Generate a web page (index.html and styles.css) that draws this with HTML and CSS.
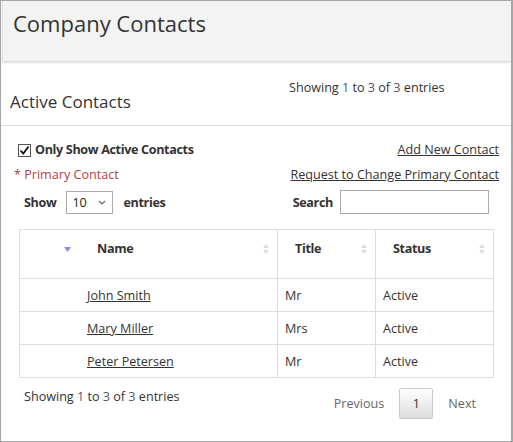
FILE: index.html
```html
<!DOCTYPE html>
<html lang="en">
<head>
    <meta charset="UTF-8">
    <title>Company Contacts</title>
    <link rel="stylesheet" href="styles.css">
</head>
<body>
    <div class="page">
        <header class="page-head">
            <h1>Company Contacts</h1>
        </header>

        <div class="panel-head">
            <h2>Active Contacts</h2>
            <div class="info">Showing <span class="num">1</span> to <span class="num">3</span> of <span class="num">3</span> entries</div>
        </div>

        <div class="panel-body">
            <div class="toolbar">
                <div class="toolbar-left">
                    <label class="only-active">
                        <span class="check"><svg width="11" height="11" viewBox="0 0 11 11"><path d="M1.5 5.5l2.8 3 5.2-7" fill="none" stroke="#111" stroke-width="1.8"/></svg></span>
                        Only Show Active Contacts
                    </label>
                    <div class="primary-note">* Primary Contact</div>
                </div>
                <div class="toolbar-right">
                    <a href="#">Add New Contact</a>
                    <a href="#">Request to Change Primary Contact</a>
                </div>
            </div>

            <div class="controls">
                <label class="length">Show
                    <span class="select">10 <svg width="8" height="5" viewBox="0 0 8 5"><path d="M1 1l3 3 3-3" fill="none" stroke="#666" stroke-width="1.2"/></svg></span>
                    entries</label>
                <label class="search">Search <input type="text"></label>
            </div>

            <table class="contacts">
                <thead>
                    <tr>
                        <th class="col-name">
                            <div class="th-in">
                                <span><svg class="sort-desc" width="7" height="5" viewBox="0 0 7 5"><path d="M0 0h7L3.5 5z" fill="#8c8cf0"/></svg>Name</span>
                                <svg class="sort" width="6" height="10" viewBox="0 0 6 10"><path d="M0 4h6L3 0zM0 6h6L3 10z" fill="#ddd"/></svg>
                            </div>
                        </th>
                        <th class="col-title">
                            <div class="th-in">
                                <span>Title</span>
                                <svg class="sort" width="6" height="10" viewBox="0 0 6 10"><path d="M0 4h6L3 0zM0 6h6L3 10z" fill="#ddd"/></svg>
                            </div>
                        </th>
                        <th class="col-status">
                            <div class="th-in">
                                <span>Status</span>
                                <svg class="sort" width="6" height="10" viewBox="0 0 6 10"><path d="M0 4h6L3 0zM0 6h6L3 10z" fill="#ddd"/></svg>
                            </div>
                        </th>
                    </tr>
                </thead>
                <tbody>
                    <tr><td class="col-name"><a href="#">John Smith</a></td><td>Mr</td><td>Active</td></tr>
                    <tr><td class="col-name"><a href="#">Mary Miller</a></td><td>Mrs</td><td>Active</td></tr>
                    <tr><td class="col-name"><a href="#">Peter Petersen</a></td><td>Mr</td><td>Active</td></tr>
                </tbody>
            </table>

            <div class="table-foot">
                <div class="info">Showing <span class="num">1</span> to <span class="num">3</span> of <span class="num">3</span> entries</div>
                <div class="paging">
                    <span class="page-link">Previous</span>
                    <span class="page-btn">1</span>
                    <span class="page-link">Next</span>
                </div>
            </div>
        </div>
    </div>
</body>
</html>
```

FILE: styles.css
```css
body {
    margin: 0;
    font-family: 'Open Sans', sans-serif;
    font-size: 12.6px;
    color: #333;
}
.page {
    width: 513px;
    height: 442px;
    box-sizing: border-box;
    border: 1px solid #a6a6a6;
    border-right-width: 2px;
    overflow: hidden;
}
.page-head {
    height: 61px;
    margin-left: 1px;
    background: #f3f3f3;
    border-left: 1px solid #e2e2e2;
    border-bottom: 1px solid #dcdcdc;
    box-shadow: 0 1px 2px rgba(0, 0, 0, 0.12);
    box-sizing: border-box;
}
.page-head h1 {
    margin: 0;
    padding: 6px 0 0 10px;
    font-size: 22px;
    font-weight: 400;
    line-height: 32px;
}
.panel-head {
    height: 64px;
    display: grid;
    grid-template-columns: 279px 1fr;
    padding: 0 9px;
    border-bottom: 1px solid #ddd;
    box-sizing: border-box;
}
.panel-head h2 {
    margin: 28px 0 0;
    font-size: 17px;
    font-weight: 400;
    line-height: 24px;
}
.panel-head .info {
    padding-top: 17px;
}
.info {
    line-height: 18px;
}
.num {
    color: #556;
}
.panel-body {
    padding: 14px 12px 0 13px;
}
.toolbar {
    display: flex;
    justify-content: space-between;
}
.only-active {
    display: flex;
    align-items: center;
    gap: 4px;
    margin-left: 4px;
    font-weight: 700;
    letter-spacing: -0.35px;
    line-height: 20px;
}
.check {
    width: 13px;
    height: 13px;
    box-sizing: border-box;
    border: 1px solid #555;
    background: #fff;
    display: flex;
    align-items: center;
    justify-content: center;
}
.primary-note {
    margin-top: 6px;
    color: #b0434b;
    line-height: 18px;
}
.toolbar-right {
    display: flex;
    flex-direction: column;
    align-items: flex-end;
    gap: 7px;
    padding-top: 1px;
}
.toolbar-right a {
    color: #333;
    line-height: 18px;
}
.controls {
    display: flex;
    justify-content: space-between;
    align-items: center;
    margin-top: 6px;
    padding: 0 10px 0 10px;
}
.length, .search {
    display: flex;
    align-items: center;
    font-weight: 700;
    letter-spacing: -0.35px;
}
.select {
    display: inline-flex;
    align-items: center;
    justify-content: space-between;
    width: 47px;
    height: 23px;
    box-sizing: border-box;
    margin: 0 10px 0 10px;
    padding: 0 6px 0 5px;
    border: 1px solid #aaa;
    font-weight: 400;
    letter-spacing: 0;
    color: #222;
}
.search input {
    width: 149px;
    height: 24px;
    box-sizing: border-box;
    margin: 0 0 0 7px;
    border: 1px solid #aaa;
}
.contacts {
    width: 475px;
    margin: 15px 0 0 5px;
    border-collapse: collapse;
}
.contacts th, .contacts td {
    border: 1px solid #ddd;
    text-align: left;
}
.contacts th {
    height: 49px;
    box-sizing: border-box;
    padding: 10px 8px 20px 17px;
    vertical-align: top;
    font-weight: 700;
    letter-spacing: -0.35px;
}
.th-in {
    display: flex;
    justify-content: space-between;
    align-items: center;
    line-height: 18px;
}
.sort-desc {
    margin: 0 26px 0 27px;
    vertical-align: 1px;
}
.contacts th.col-name {
    width: 258px;
    padding-left: 17px;
}
.contacts th.col-title {
    width: 98px;
}
.contacts td {
    height: 33px;
    box-sizing: border-box;
    padding: 1px 7px 0;
}
.contacts td.col-name {
    padding-left: 67px;
}
.contacts td a {
    color: #333;
}
.table-foot {
    display: flex;
    justify-content: space-between;
    align-items: flex-start;
    margin-top: 10px;
    padding-left: 10px;
}
.paging {
    display: flex;
    align-items: center;
    padding-right: 8px;
}
.page-link {
    color: #666;
    padding: 0 15px;
}
.page-btn {
    width: 34px;
    height: 31px;
    box-sizing: border-box;
    display: flex;
    align-items: center;
    justify-content: center;
    border: 1px solid #cacaca;
    border-radius: 2px;
    background: linear-gradient(#fff, #dcdcdc);
    color: #333;
}
```
